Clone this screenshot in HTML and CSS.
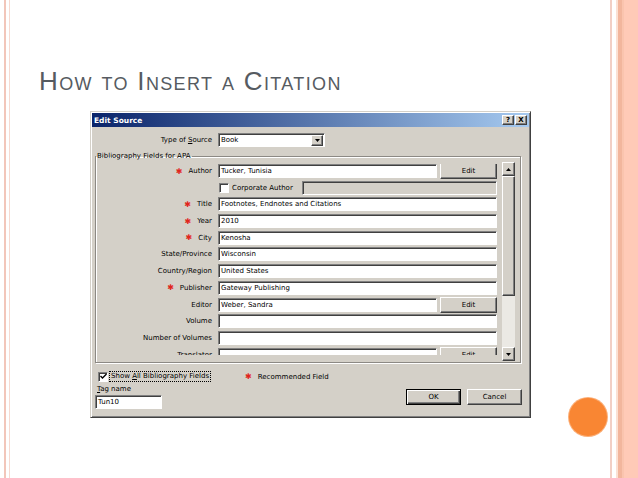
FILE: index.html
```html
<!DOCTYPE html>
<html lang="en">
<head>
    <meta charset="UTF-8">
    <meta name="viewport" content="width=device-width, initial-scale=1.0">
    <title>How to Insert a Citation</title>
    <link rel="stylesheet" href="styles.css">
</head>

<body>
    <div class="slide">
        <h1 class="title">How to Insert a Citation</h1>

        <div class="dialog">
            <div class="titlebar">
                <span>Edit Source</span>
                <div class="caption-btns">
                    <span class="cap-btn">?</span>
                    <span class="cap-btn">X</span>
                </div>
            </div>

            <div class="type-row">
                <label>Type of <u>S</u>ource</label>
                <div class="select">
                    <span>Book</span>
                    <span class="drop">
                        <svg width="5" height="3" viewBox="0 0 5 3"><path d="M0 0H5L2.5 3Z" fill="#000"/></svg>
                    </span>
                </div>
            </div>

            <fieldset class="group">
                <legend>Bibliography Fields for APA</legend>
                <div class="fields">
                    <div class="rows">
                        <label><i class="req">&#10033;</i>Author</label>
                        <div class="with-btn"><div class="field">Tucker, Tunisia</div><span class="btn">Edit</span></div>

                        <span></span>
                        <div class="corp">
                            <span class="check"></span>
                            <span class="corp-label">Corporate Author</span>
                            <div class="field off"></div>
                        </div>

                        <label><i class="req">&#10033;</i>Title</label>
                        <div class="field">Footnotes, Endnotes and Citations</div>

                        <label><i class="req">&#10033;</i>Year</label>
                        <div class="field">2010</div>

                        <label><i class="req">&#10033;</i>City</label>
                        <div class="field">Kenosha</div>

                        <label>State/Province</label>
                        <div class="field">Wisconsin</div>

                        <label>Country/Region</label>
                        <div class="field">United States</div>

                        <label><i class="req">&#10033;</i>Publisher</label>
                        <div class="field">Gateway Publishing</div>

                        <label>Editor</label>
                        <div class="with-btn"><div class="field">Weber, Sandra</div><span class="btn">Edit</span></div>

                        <label>Volume</label>
                        <div class="field"></div>

                        <label>Number of Volumes</label>
                        <div class="field"></div>

                        <label>Translator</label>
                        <div class="with-btn"><div class="field"></div><span class="btn">Edit</span></div>
                    </div>

                    <div class="scroll">
                        <span class="arrow">
                            <svg width="5" height="3" viewBox="0 0 5 3"><path d="M0 3H5L2.5 0Z" fill="#000"/></svg>
                        </span>
                        <span class="thumb"></span>
                        <span class="track"></span>
                        <span class="arrow">
                            <svg width="5" height="3" viewBox="0 0 5 3"><path d="M0 0H5L2.5 3Z" fill="#000"/></svg>
                        </span>
                    </div>
                </div>
            </fieldset>

            <div class="options">
                <span class="check on">
                    <svg width="7" height="7" viewBox="0 0 7 7"><path d="M0.5 3L2.5 5L6.5 1" stroke="#000" stroke-width="1.4" fill="none"/></svg>
                </span>
                <span class="focus">Show <u>A</u>ll Bibliography Fields</span>
                <span class="legend-note"><i class="req">&#10033;</i>Recommended Field</span>
            </div>

            <div class="bottom">
                <div class="tag">
                    <label><u>T</u>ag name</label>
                    <div class="field tag-field">Tun10</div>
                </div>
                <div class="actions">
                    <span class="btn default">OK</span>
                    <span class="btn">Cancel</span>
                </div>
            </div>
        </div>

        <span class="dot"></span>
    </div>
</body>
</html>
```

FILE: styles.css
```css
body {
    margin: 0;
}

.slide {
    width: 638px;
    height: 478px;
    position: relative;
    overflow: hidden;
    font-family: "DejaVu Sans", sans-serif;
    background: linear-gradient(to right,
        #fff 0 4px, #f2c6ba 4px 6px, #fff 6px 9px, #f7dad1 9px 10px,
        #fff 10px 610px, #f2cfc5 610px 612px, #fff 612px 616px,
        #fbe1d4 616px 618px, #f2b69d 618px 622px, #fac4ae 622px 624px,
        #ffcab7 624px);
}

.title {
    margin: 0;
    padding: 66px 0 0 39px;
    font: 400 26px/30px "Liberation Sans", Arial, sans-serif;
    font-variant: small-caps;
    letter-spacing: 1.35px;
    color: #565b61;
}

/* the Word dialog */
.dialog {
    width: 441px;
    height: 307px;
    box-sizing: border-box;
    margin: 15px 0 0 90px;
    padding: 1px;
    background: #d4d0c8;
    border: 1px solid;
    border-color: #d4d0c8 #404040 #404040 #d4d0c8;
    box-shadow: inset 1px 1px #fff, inset -1px -1px #808080;
    font-size: 7px;
    color: #000;
}

.titlebar {
    height: 14px;
    display: flex;
    align-items: center;
    justify-content: space-between;
    padding: 0 2px 0 2px;
    background: linear-gradient(to right, #0a246a, #a6caf0);
    color: #fff;
    font-weight: bold;
    font-size: 7.5px;
}

.caption-btns {
    display: flex;
    gap: 1px;
}

.cap-btn,
.btn,
.drop,
.arrow,
.thumb {
    background: #d4d0c8;
    border: 1px solid;
    border-color: #fff #404040 #404040 #fff;
    box-shadow: inset -1px -1px #808080;
    box-sizing: border-box;
}

.cap-btn {
    width: 12px;
    height: 10px;
    display: flex;
    align-items: center;
    justify-content: center;
    color: #000;
    font-size: 7px;
}

.type-row {
    display: flex;
    align-items: center;
    gap: 6px;
    margin-top: 6px;
}

.type-row label {
    width: 120px;
    text-align: right;
}

.select,
.field {
    height: 14px;
    box-sizing: border-box;
    background: #fff;
    border: 1px solid;
    border-color: #808080 #fff #fff #808080;
    box-shadow: inset 1px 1px #404040;
    padding-left: 2px;
    display: flex;
    align-items: center;
    white-space: nowrap;
}

.select {
    width: 107px;
    justify-content: space-between;
    padding-right: 1px;
}

.drop {
    width: 12px;
    height: 11px;
    display: flex;
    align-items: center;
    justify-content: center;
}

.group {
    width: 426px;
    box-sizing: border-box;
    margin: 5px 0 0 3px;
    padding: 3px 5px 1px 0;
    border: 1px solid #8c8984;
    box-shadow: 1px 1px #fff, inset 1px 1px #fff;
}

.group legend {
    padding: 0 2px 0 1px;
    margin-left: 0;
    line-height: 9px;
}

.fields {
    display: flex;
    align-items: flex-start;
    gap: 5px;
}

.rows {
    width: 401px;
    height: 191px;
    overflow: hidden;
    display: grid;
    grid-template-columns: 116px 279px;
    grid-auto-rows: 14px;
    column-gap: 6px;
    row-gap: 2.7px;
}

.rows label {
    display: flex;
    align-items: center;
    justify-content: flex-end;
    white-space: nowrap;
}

.req {
    font-style: normal;
    color: #e1261d;
    font-size: 8px;
    margin-right: 6px;
}

.with-btn {
    display: flex;
    align-items: center;
    gap: 3px;
}

.with-btn .field {
    width: 219px;
}

.btn {
    height: 16px;
    display: flex;
    align-items: center;
    justify-content: center;
}

.with-btn .btn {
    width: 57px;
}

.corp {
    display: flex;
    align-items: center;
}

.check {
    width: 10px;
    height: 10px;
    box-sizing: border-box;
    background: #fff;
    border: 1px solid;
    border-color: #808080 #fff #fff #808080;
    box-shadow: inset 1px 1px #404040;
    display: flex;
    align-items: center;
    justify-content: center;
    margin-left: 1px;
}

.corp-label {
    margin: 0 9px 0 3px;
}

.corp .field {
    flex: 1;
}

.field.off {
    background: #d4d0c8;
}

.scroll {
    width: 13px;
    height: 199px;
    margin-top: -2px;
    display: flex;
    flex-direction: column;
}

.arrow {
    height: 14px;
    display: flex;
    align-items: center;
    justify-content: center;
}

.thumb {
    height: 120px;
}

.track {
    flex: 1;
    background: #ebe9e4;
}

.options {
    display: flex;
    align-items: center;
    margin: 8px 0 0 5px;
    height: 11px;
}

.options .check {
    width: 10px;
    height: 10px;
}

.focus {
    margin-left: 1px;
    padding: 0 1px;
    line-height: 9px;
    border: 1px dotted #000;
}

.legend-note {
    margin-left: 34px;
    display: flex;
    align-items: center;
}

.bottom {
    display: flex;
    justify-content: space-between;
    align-items: flex-end;
}

.tag {
    margin-left: 3px;
}

.tag label {
    display: block;
    padding-left: 2px;
    margin-top: 2px;
    line-height: 11px;
}

.tag-field {
    width: 67px;
}

.actions {
    display: flex;
    gap: 6px;
    margin: 0 7px 4px 0;
}

.actions .btn {
    width: 55px;
}

.btn.default {
    border-color: #000;
    box-shadow: inset 1px 1px #fff, inset -1px -1px #404040, inset -2px -2px #808080;
}

.dot {
    position: absolute;
    left: 569px;
    top: 398px;
    width: 38px;
    height: 38px;
    border-radius: 50%;
    background: #f98633;
    box-shadow: 0 0 0 1px #fbb07a;
}
```
